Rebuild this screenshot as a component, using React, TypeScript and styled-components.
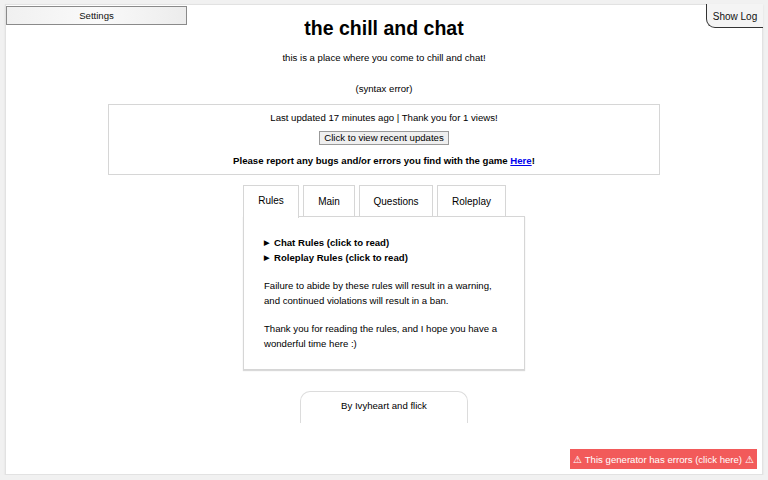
import React from "react";
import styled, { createGlobalStyle } from "styled-components";

const Global = createGlobalStyle`
  html, body { margin: 0; padding: 0; background: #f1f1f1; }
  body { font-family: "Liberation Sans", Arial, sans-serif; color: #000; }
`;

const Page = styled.div`
  position: relative;
  box-sizing: border-box;
  margin: 4px 5px 0 5px;
  height: 471px;
  background: #fff;
  border: 1px solid #e2e2e2;
  box-shadow: 0 1px 2px rgba(0,0,0,0.08);
  display: flex;
  flex-direction: column;
  align-items: center;
`;

const SettingsButton = styled.button`
  position: absolute;
  left: 0;
  top: 1px;
  width: 181px;
  height: 19px;
  font-family: "Liberation Sans", Arial, sans-serif;
  font-size: 9.6px;
  color: #111;
  background: linear-gradient(to right, #f0f0f0, #fafafa 50%, #ececec);
  border: 1px solid #8a8a8a;
  padding: 0;
`;

const ShowLog = styled.button`
  position: absolute;
  right: -1px;
  top: -1px;
  width: 57px;
  height: 24px;
  font-family: "Liberation Sans", Arial, sans-serif;
  font-size: 10px;
  color: #111;
  background: #f4f4f4;
  border: 1px solid #333;
  border-top: none;
  border-right: none;
  border-bottom-left-radius: 9px;
  padding: 1px 2px 0 2px;
`;

const Title = styled.h1`
  margin: 11px 0 0 0;
  font-size: 19.5px;
  font-weight: bold;
  line-height: 24px;
`;

const Sub = styled.p`
  margin: 11px 0 0 0;
  font-size: 9.6px;
  line-height: 14px;
`;

const Syntax = styled(Sub)`
  margin-top: 17px;
`;

const InfoBox = styled.div`
  box-sizing: border-box;
  width: 552px;
  height: 71px;
  margin-top: 8px;
  border: 1px solid #d6d6d6;
  display: flex;
  flex-direction: column;
  align-items: center;
  font-size: 9.6px;
  padding-top: 7px;
`;

const InfoLine = styled.div`
  line-height: 12px;
`;

const SmallButton = styled.button`
  margin-top: 7px;
  font-family: "Liberation Sans", Arial, sans-serif;
  font-size: 9.6px;
  height: 14px;
  line-height: 12px;
  padding: 0 4px;
  background: #efefef;
  border: 1px solid #999;
  color: #000;
`;

const Report = styled.div`
  margin-top: 10px;
  font-weight: bold;
  line-height: 12px;
  a { color: #0000ee; }
`;

const TabsWrap = styled.div`
  margin-top: 10px;
  width: 282px;
  display: flex;
  flex-direction: column;
`;

const TabRow = styled.div`
  display: flex;
  gap: 4px;
  height: 32px;
`;

const Tab = styled.div<{ $w: number; $active?: boolean }>`
  box-sizing: border-box;
  width: ${(p) => p.$w}px;
  height: ${(p) => (p.$active ? 33 : 32)}px;
  border: 1px solid #d6d6d6;
  border-bottom: ${(p) => (p.$active ? "none" : "1px solid #d6d6d6")};
  background: #fff;
  font-size: 10px;
  display: flex;
  align-items: ${(p) => (p.$active ? "flex-start" : "center")};
  padding-top: ${(p) => (p.$active ? "9px" : "0")};
  justify-content: center;
  position: relative;
  z-index: ${(p) => (p.$active ? 2 : 1)};
`;

const Panel = styled.div`
  box-sizing: border-box;
  margin-top: -1px;
  height: 154px;
  border: 1px solid #d6d6d6;
  box-shadow: 0 1px 1px rgba(0,0,0,0.15);
  padding: 18px 19px 0 20px;
  font-size: 9.6px;
  line-height: 15px;
`;

const Summary = styled.div`
  font-weight: bold;
  height: 15px;
  &::before {
    content: "▶";
    display: inline-block;
    font-size: 7px;
    line-height: 15px;
    margin-right: 5px;
    vertical-align: top;
  }
`;

const Para = styled.p`
  margin: 13px 0 0 0;
  white-space: nowrap;
`;

const Footer = styled.div`
  box-sizing: border-box;
  margin-top: 21px;
  width: 168px;
  height: 32px;
  border: 1px solid #dcdcdc;
  border-bottom: none;
  border-radius: 10px 10px 0 0;
  font-size: 9.6px;
  display: flex;
  align-items: center;
  justify-content: center;
  padding-bottom: 4px;
`;

const ErrorButton = styled.div`
  position: absolute;
  right: 5px;
  bottom: 5px;
  width: 187px;
  height: 20px;
  background: #f25a5a;
  color: #fff;
  font-size: 9.6px;
  white-space: nowrap;
  display: flex;
  align-items: center;
  justify-content: center;
`;

export default function App() {
  return (
    <>
      <Global />
      <Page>
        <SettingsButton>Settings</SettingsButton>
        <ShowLog>Show Log</ShowLog>
        <Title>the chill and chat</Title>
        <Sub>this is a place where you come to chill and chat!</Sub>
        <Syntax>(syntax error)</Syntax>
        <InfoBox>
          <InfoLine>Last updated 17 minutes ago | Thank you for 1 views!</InfoLine>
          <SmallButton>Click to view recent updates</SmallButton>
          <Report>
            Please report any bugs and/or errors you find with the game <a href="#">Here</a>!
          </Report>
        </InfoBox>
        <TabsWrap>
          <TabRow>
            <Tab $w={56} $active>Rules</Tab>
            <Tab $w={52}>Main</Tab>
            <Tab $w={74}>Questions</Tab>
            <Tab $w={69}>Roleplay</Tab>
          </TabRow>
          <Panel>
            <Summary>Chat Rules (click to read)</Summary>
            <Summary>Roleplay Rules (click to read)</Summary>
            <Para>
              Failure to abide by these rules will result in a warning,
              <br />
              and continued violations will result in a ban.
            </Para>
            <Para>
              Thank you for reading the rules, and I hope you have a
              <br />
              wonderful time here :)
            </Para>
          </Panel>
        </TabsWrap>
        <Footer>By Ivyheart and flick</Footer>
        <ErrorButton>⚠ This generator has errors (click here) ⚠</ErrorButton>
      </Page>
    </>
  );
}
